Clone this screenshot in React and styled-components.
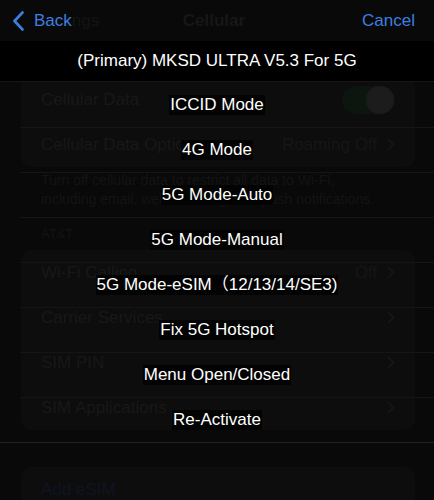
import React from 'react';
import styled, { createGlobalStyle } from 'styled-components';

const Global = createGlobalStyle`
  body{
    margin: 0;
    background: #090909;
    font-family: "Liberation Sans", Arial, "Noto Sans CJK SC", sans-serif;
  }
`

const Screen = styled.div`
  position: relative;
  width: 434px;
  height: 500px;
  overflow: hidden;
  background: #090909;
`

/* settings page behind the menu, dimmed */
const NavBar = styled.div`
  height: 41px;
  display: grid;
  grid-template-columns: 1fr auto 1fr;
  align-items: center;
  padding: 0 19px 0 13px;
  font-size: 17px;
`
const BackBtn = styled.div`
  display: flex;
  align-items: center;
  color: #3d7fe0;
  svg{ margin-right: 10px; }
`
const Ghost = styled.span`
  color: #141414;
`
const NavTitle = styled.div`
  color: #171717;
  font-weight: 600;
`
const CancelBtn = styled.div`
  justify-self: end;
  color: #3d7fe0;
`

const Content = styled.div`
  padding: 36px 19px 0 21px;
`
const Card = styled.div`
  background: #0d0d0d;
  border-radius: 10px;
  margin-top: ${p => p.$top || 0}px;
`
const Row = styled.div`
  height: 45px;
  display: flex;
  align-items: center;
  justify-content: space-between;
  padding: 0 20px 0 20px;
  font-size: 17px;
  color: ${p => p.$blue ? '#0f1422' : '#181818'};
`
const Detail = styled.span`
  display: flex;
  align-items: center;
  gap: 10px;
  color: #161616;
`
const Toggle = styled.span`
  width: 52px;
  height: 28px;
  border-radius: 14px;
  background: #0d150f;
  display: flex;
  justify-content: flex-end;
  align-items: center;
  padding-right: 1px;
  &::after{
    content: "";
    width: 28px;
    height: 28px;
    border-radius: 50%;
    background: #1c1c1c;
  }
`
const Footer = styled.div`
  padding: 4px 20px 0;
  font-size: 14px;
  line-height: 19px;
  color: #141414;
  white-space: nowrap;
`
const GroupLabel = styled.div`
  padding: 17px 20px 8px;
  font-size: 13px;
  line-height: 16px;
  color: #131313;
`

/* action menu overlay */
const Menu = styled.div`
  position: absolute;
  top: 41px;
  left: 0;
  right: 0;
  border-bottom: 1px solid #222;
`
const MenuHeader = styled.div`
  height: 40px;
  background: #000;
  display: flex;
  align-items: center;
  justify-content: center;
  color: #fff;
  font-size: 17px;
  border-bottom: 1px solid #161616;
`
const Item = styled.div`
  height: 45px;
  display: flex;
  align-items: center;
  justify-content: center;
  position: relative;
  & + &::before{
    content: "";
    position: absolute;
    top: 0;
    left: 20px;
    right: 0;
    height: 1px;
    background: #151515;
  }
`
const ItemText = styled.span`
  background: #030303;
  color: #fff;
  font-size: 17px;
  line-height: 20px;
  padding: 0 1px;
`

const Chevron = () => (
  <svg width="11" height="20" viewBox="0 0 11 20">
    <polyline points="9.5,1.5 1.5,10 9.5,18.5" fill="none" stroke="#3d7fe0" strokeWidth="2.6" strokeLinecap="round" strokeLinejoin="round" />
  </svg>
)
const Disclosure = () => (
  <svg width="8" height="13" viewBox="0 0 8 13">
    <polyline points="1.5,1.5 6.5,6.5 1.5,11.5" fill="none" stroke="#161616" strokeWidth="2" strokeLinecap="round" strokeLinejoin="round" />
  </svg>
)

const items = [
  'ICCID Mode',
  '4G Mode',
  '5G Mode-Auto',
  '5G Mode-Manual',
  '5G Mode-eSIM（12/13/14/SE3)',
  'Fix 5G Hotspot',
  'Menu Open/Closed',
  'Re-Activate',
]

export default function App(){
  return(
    <Screen>
      <Global />
      <NavBar>
        <BackBtn>
          <Chevron />
          Back<Ghost>ngs</Ghost>
        </BackBtn>
        <NavTitle>Cellular</NavTitle>
        <CancelBtn>Cancel</CancelBtn>
      </NavBar>
      <Content>
        <Card>
          <Row>Cellular Data<Toggle /></Row>
          <Row>Cellular Data Options<Detail>Roaming Off <Disclosure /></Detail></Row>
        </Card>
        <Footer>
          Turn off cellular data to restrict all data to Wi-Fi,<br />
          including email, web browsing, and push notifications.
        </Footer>
        <GroupLabel>AT&amp;T</GroupLabel>
        <Card>
          <Row>Wi-Fi Calling<Detail>Off <Disclosure /></Detail></Row>
          <Row>Carrier Services<Detail><Disclosure /></Detail></Row>
          <Row>SIM PIN<Detail><Disclosure /></Detail></Row>
          <Row>SIM Applications<Detail><Disclosure /></Detail></Row>
        </Card>
        <Card $top={37}>
          <Row $blue>Add eSIM</Row>
        </Card>
      </Content>
      <Menu>
        <MenuHeader>(Primary) MKSD ULTRA V5.3 For 5G</MenuHeader>
        {
          items.map((label, i) => (
            <Item key={i}>
              <ItemText>{label}</ItemText>
            </Item>
          ))
        }
      </Menu>
    </Screen>
  )
}
